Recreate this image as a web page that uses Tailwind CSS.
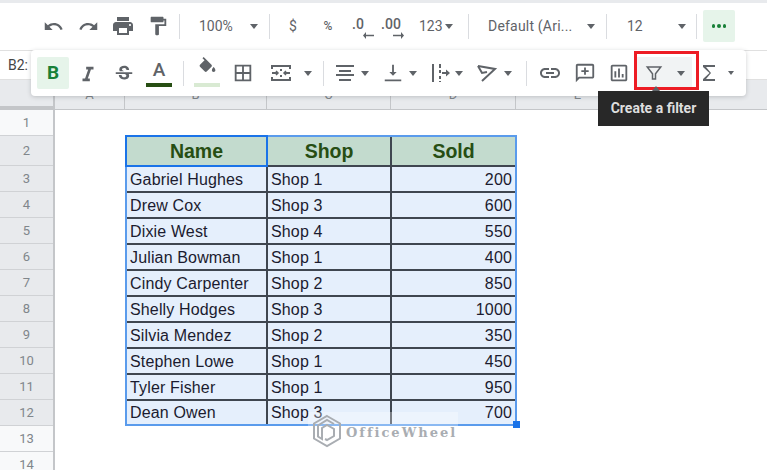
<!DOCTYPE html>
<html><head><meta charset="utf-8">
<script src="https://cdn.jsdelivr.net/npm/@tailwindcss/browser@4"></script>
</head>
<body class="w-[767px] h-[470px] overflow-hidden bg-white relative font-['Roboto',sans-serif] text-[#444746]">
<!-- top toolbar -->
<div class="h-[3px] bg-[#e8eaed]"></div>
<div class="h-[47px] flex items-center pl-[36px] pb-[1px] text-[#5f6368]">
  <div class="w-[35px] flex justify-center"><svg class="w-[21px] h-[21px] fill-[#5f6368]" viewBox="0 0 24 24"><path d="M12.5 8c-2.65 0-5.05.99-6.9 2.6L2 7v9h9l-3.62-3.62c1.39-1.16 3.16-1.88 5.12-1.88 3.54 0 6.55 2.31 7.6 5.5l2.37-.78C21.08 11.03 17.15 8 12.5 8z"/></svg></div>
  <div class="w-[35px] flex justify-center"><svg class="w-[21px] h-[21px] fill-[#5f6368]" viewBox="0 0 24 24"><path d="M18.4 10.6C16.55 8.99 14.15 8 11.5 8c-4.65 0-8.58 3.03-9.96 7.22L3.9 16c1.05-3.19 4.05-5.5 7.6-5.5 1.95 0 3.73.72 5.12 1.88L13 16h9V7l-3.6 3.6z"/></svg></div>
  <div class="w-[34px] flex justify-center"><svg class="w-[24px] h-[24px] fill-[#5f6368]" viewBox="0 0 24 24"><path d="M19 8H5c-1.66 0-3 1.34-3 3v6h4v4h12v-4h4v-6c0-1.66-1.34-3-3-3zm-3 11H8v-5h8v5zm3-7c-.55 0-1-.45-1-1s.45-1 1-1 1 .45 1 1-.45 1-1 1zm-1-9H6v4h12V3z"/></svg></div>
  <div class="w-[35px] flex justify-center"><svg class="w-[22px] h-[22px] fill-[#5f6368]" viewBox="0 0 24 24"><path d="M18 4V3c0-.55-.45-1-1-1H5c-.55 0-1 .45-1 1v4c0 .55.45 1 1 1h12c.55 0 1-.45 1-1V6h1v4H9v11c0 .55.45 1 1 1h2c.55 0 1-.45 1-1v-9h8V4h-3z"/></svg></div>
  <div class="w-px h-[25px] bg-[#dadce0] ml-[4px]"></div>
  <div class="w-[65px] pl-[19px] text-[14px]">100%</div>
  <div class="w-0 h-0 border-x-[4.5px] border-x-transparent border-t-[5px] border-t-[#5f6368] ml-[5px]"></div>
  <div class="w-px h-[25px] bg-[#dadce0] ml-[11px]"></div>
  <div class="w-[46px] text-center text-[14px]">$</div>
  <div class="w-[24px] text-center text-[12px] font-medium">%</div>
  <div class="w-[36px] flex justify-center"><div class="relative text-[14px] font-medium leading-none -mt-[4px]">.0<svg class="absolute left-[11px] top-[15px] w-[11px] h-[7px] fill-[#5f6368]" viewBox="0 0 11 7"><path d="M3 0v2.700h8v1.600H3V7L0 3.500z"/></svg></div></div>
  <div class="w-[30px] flex justify-center"><div class="relative text-[14px] font-medium leading-none -mt-[4px]">.00<svg class="absolute left-[12px] top-[15px] w-[11px] h-[7px] fill-[#5f6368]" viewBox="0 0 11 7"><path d="M8 0v2.700H0v1.600h8V7l3-3.500z"/></svg></div></div>
  <div class="w-[37px] text-[14px] pl-[13px]">123</div>
  <div class="w-0 h-0 border-x-[4.5px] border-x-transparent border-t-[5px] border-t-[#5f6368] ml-[2px]"></div>
  <div class="w-px h-[25px] bg-[#dadce0] ml-[15px]"></div>
  <div class="w-[113px] pl-[19px] text-[14px] tracking-[0.2px] whitespace-nowrap">Default (Ari...</div>
  <div class="w-0 h-0 border-x-[4.5px] border-x-transparent border-t-[5px] border-t-[#5f6368] ml-[5px]"></div>
  <div class="w-px h-[25px] bg-[#dadce0] ml-[11px]"></div>
  <div class="w-[71px] pl-[20px] text-[14px]">12</div>
  <div class="w-0 h-0 border-x-[4.5px] border-x-transparent border-t-[5px] border-t-[#5f6368]"></div>
  <div class="w-px h-[25px] bg-[#dadce0] ml-[10px]"></div>
  <div class="w-[32px] h-[32px] ml-[6px] rounded-[2px] bg-[#e6f4ea] flex items-center justify-center gap-[2px]">
    <span class="w-[3.5px] h-[3.5px] rounded-full bg-[#188038]"></span><span class="w-[3.5px] h-[3.5px] rounded-full bg-[#188038]"></span><span class="w-[3.5px] h-[3.5px] rounded-full bg-[#188038]"></span>
  </div>
</div>
<!-- formula bar -->
<div class="h-[30px] border-y border-[#e0e0e0] flex items-center pl-[8px] text-[14px] text-[#444]"><span>B2:</span></div>
<!-- sheet -->
<div class="flex">
  <div class="w-[55px] shrink-0 bg-[#e8eaed] border-r-2 border-[#c4c6c9] text-[13px] text-[#80868b] text-center">
    <div class="h-[30px] border-b-4 border-[#c4c6c9] bg-[#e8eaed]"></div>
    <div class="h-[26px] leading-[25px] border-b border-[#d0d2d5] bg-[#f8f9fa]">1</div>
    <div class="h-[30px] leading-[29px] border-b border-[#d0d2d5]">2</div>
    <div class="h-[26px] leading-[25px] border-b border-[#d0d2d5]">3</div>
    <div class="h-[26px] leading-[25px] border-b border-[#d0d2d5]">4</div>
    <div class="h-[26px] leading-[25px] border-b border-[#d0d2d5]">5</div>
    <div class="h-[26px] leading-[25px] border-b border-[#d0d2d5]">6</div>
    <div class="h-[26px] leading-[25px] border-b border-[#d0d2d5]">7</div>
    <div class="h-[26px] leading-[25px] border-b border-[#d0d2d5]">8</div>
    <div class="h-[26px] leading-[25px] border-b border-[#d0d2d5]">9</div>
    <div class="h-[26px] leading-[25px] border-b border-[#d0d2d5]">10</div>
    <div class="h-[26px] leading-[25px] border-b border-[#d0d2d5]">11</div>
    <div class="h-[26px] leading-[25px] border-b border-[#d0d2d5]">12</div>
    <div class="h-[26px] leading-[25px] border-b border-[#d0d2d5] bg-[#f8f9fa]">13</div>
    <div class="h-[26px] leading-[25px] bg-[#f8f9fa]">14</div>
  </div>
  <div class="flex-1 min-w-0">
    <div class="h-[30px] bg-[#e8eaed] border-b border-[#c4c6c9] flex text-[13px] text-[#80868b] text-center leading-[29px]">
      <div class="w-[70px] border-r border-[#c4c6c9]">A</div>
      <div class="w-[142px] border-r border-[#c4c6c9]">B</div>
      <div class="w-[124px] border-r border-[#c4c6c9]">C</div>
      <div class="w-[125px] border-r border-[#c4c6c9]">D</div>
      <div class="w-[124px] border-r border-[#c4c6c9]">E</div>
      <div class="flex-1"></div>
    </div>
    <div class="h-[26px]"></div>
    <div class="ml-[70px] w-[392px] relative font-['Liberation_Sans',Arial,sans-serif] text-[16px] tracking-[0.15px] text-[#1b1b2f] border-2 border-[#5a9bec] -mt-[1px]">
      <div class="grid grid-cols-[141px_124px_1fr] h-[30px] bg-[#c3dbce] text-[#274e13] text-[19.5px] tracking-normal font-bold text-center leading-[28px] border-b-2 border-[#3f4650]">
        <div class="border-2 border-[#1a73e8] -ml-[2px] -mt-[2px] leading-[28px]">Name</div>
        <div class="border-r-2 border-[#3f4650]">Shop</div>
        <div>Sold</div>
      </div>
      <div class="grid grid-cols-[141px_124px_1fr] grid-rows-[repeat(9,26px)_23px] bg-[#e5effc] leading-[25px] [&>div]:px-[3px] [&>div]:border-b-2 [&>div]:border-[#3f4650] [&>div:nth-child(3n+1)]:border-r-2 [&>div:nth-child(3n+2)]:border-r-2 [&>div:nth-child(3n)]:text-right [&>div:nth-last-child(-n+3)]:border-b-0 [&>div:nth-last-child(-n+3)]:leading-[23px]">
        <div>Gabriel Hughes</div><div>Shop 1</div><div>200</div>
        <div>Drew Cox</div><div>Shop 3</div><div>600</div>
        <div>Dixie West</div><div>Shop 4</div><div>550</div>
        <div>Julian Bowman</div><div>Shop 1</div><div>400</div>
        <div>Cindy Carpenter</div><div>Shop 2</div><div>850</div>
        <div>Shelly Hodges</div><div>Shop 3</div><div>1000</div>
        <div>Silvia Mendez</div><div>Shop 2</div><div>350</div>
        <div>Stephen Lowe</div><div>Shop 1</div><div>450</div>
        <div>Tyler Fisher</div><div>Shop 1</div><div>950</div>
        <div>Dean Owen</div><div>Shop 3</div><div>700</div>
      </div>
      <div class="absolute right-[-5px] bottom-[-4px] w-[7px] h-[7px] bg-[#1a73e8]"></div>
    </div>
  </div>
</div>
<!-- watermark -->
<div class="absolute left-[308px] top-[412px] w-[150px] h-[33px] bg-white/30 flex items-center gap-[4px] pl-[4px]">
  <svg class="w-[30px] h-[34px] shrink-0 mt-[5px]" viewBox="0 0 30 34" fill="none" stroke="#a9adb2" stroke-width="2"><path d="M15 2l13 7.500v15L15 32 2 24.500v-15z"/><path d="M22 10l-7-4-9 5.500v11l4 2.500v-11l5-3 7 4v7l-7 4-2-1"/></svg>
  <span class="font-['DejaVu_Serif',serif] text-[13px] tracking-[2px] text-[#a9adb2] font-bold mt-[8px] whitespace-nowrap">OfficeWheel</span>
</div>
<!-- floating toolbar -->
<div class="absolute left-[31px] top-[50px] w-[715px] h-[46px] bg-white rounded-[4px] shadow-[0_1px_4px_rgba(60,64,67,0.25)] flex items-center pl-[6px]">
  <div class="w-[32px] h-[32px] rounded-[2px] bg-[#e6f4ea] text-[#188038] font-bold text-[19px] flex items-center justify-center font-['Roboto',sans-serif]">B</div>
  <div class="w-[36px] ml-[1px] text-center"><svg class="w-[22px] h-[22px] inline fill-[#5f6368]" viewBox="0 0 24 24"><path d="M10 4v3h2.210l-3.420 10H6v3h8v-3h-2.210l3.420-10H18V4z"/></svg></div>
  <div class="w-[35px] text-center"><svg class="w-[22px] h-[22px] inline fill-[#5f6368]" viewBox="0 0 24 24"><path d="M6.850 7.080C6.850 4.370 9.450 3 12.240 3c1.640 0 3 .49 3.900 1.280.77.650 1.460 1.730 1.460 3.240h-3.010c0-.31-.05-.590-.150-.850-.290-.860-1.200-1.280-2.250-1.280-1.860 0-2.340 1.020-2.340 1.700 0 .480.250.880.740 1.210.380.250.770.480 1.410.700H7.390c-.210-.340-.540-.890-.540-1.920zM21 12v-2H3v2h9.620c1.150.450 1.960.750 1.960 1.970 0 1-.810 1.670-2.280 1.670-1.540 0-2.930-.540-2.930-2.510H6.400c0 .550.080 1.130.240 1.580.810 2.290 3.290 3.300 5.670 3.300 2.270 0 5.300-.890 5.300-4.050 0-.300-.010-1.160-.480-1.960H21z"/></svg></div>
  <div class="w-[36px] flex flex-col items-center relative h-[32px]"><span class="text-[19px] font-medium leading-[25px] text-[#5f6368]">A</span><div class="absolute left-[5px] top-[26px] w-[26px] h-[4px] bg-[#274e13]"></div></div>
  <div class="w-px h-[25px] bg-[#dadce0] ml-[6px]"></div>
  <div class="w-[48px] h-[32px] relative flex justify-center pr-[2px]"><svg class="w-[21px] h-[21px] fill-[#5f6368]" viewBox="0 0 24 24"><path d="M16.560 8.940L7.620 0 6.210 1.410l2.380 2.380-5.150 5.150c-.590.590-.590 1.540 0 2.120l5.500 5.500c.290.290.680.440 1.060.440s.770-.150 1.060-.440l5.500-5.500c.590-.580.590-1.530 0-2.120zM19 11.500s-2 2.170-2 3.500c0 1.100.9 2 2 2s2-.9 2-2c0-1.330-2-3.500-2-3.500z"/></svg><div class="absolute left-[10px] top-[26px] w-[26px] h-[4px] bg-[#d9ead3]"></div></div>
  <div class="w-[22px] flex justify-center"><svg class="w-[22px] h-[22px] shrink-0 fill-[#5f6368]" viewBox="0 0 24 24"><path d="M3 3v18h18V3H3zm8 16H5v-6h6v6zm0-8H5V5h6v6zm8 8h-6v-6h6v6zm0-8h-6V5h6v6z"/></svg></div>
  <div class="w-[40px] ml-[7px] text-center"><svg class="w-[24px] h-[24px] inline" viewBox="0 0 24 24" fill="none" stroke="#5f6368" stroke-width="2"><path d="M3 8V5h18v3M3 16v3h18v-3M3 12h6M15 12h6"/><path d="M7 10l2 2-2 2M17 10l-2 2 2 2" stroke-width="1.500"/><path d="M12 8v2M12 14v2" /></svg></div>
  <div class="w-0 h-0 border-x-[4.5px] border-x-transparent border-t-[5px] border-t-[#5f6368] ml-[3px]"></div>
  <div class="w-px h-[25px] bg-[#dadce0] ml-[11px]"></div>
  <div class="w-[38px] pl-[9px]"><svg class="w-[24px] h-[24px] fill-[#5f6368]" viewBox="0 0 24 24"><path d="M3 4h18v2H3zM6 9h12v2H6zM3 13h18v2H3zM6 18h12v2H6z"/></svg></div>
  <div class="w-0 h-0 border-x-[4.5px] border-x-transparent border-t-[5px] border-t-[#5f6368] -ml-[1px]"></div>
  <div class="w-[33px] ml-[2px] pl-[11px] flex justify-center"><svg class="w-[22px] h-[22px] shrink-0 fill-[#5f6368]" viewBox="0 0 24 24"><path d="M3 19h18v2H3zM16 11h-3V3h-2v8H8l4 4z"/></svg></div>
  <div class="w-0 h-0 border-x-[4.5px] border-x-transparent border-t-[5px] border-t-[#5f6368] ml-[5px]"></div>
  <div class="w-[34px] ml-[2px] pl-[8px] flex justify-center"><svg class="w-[24px] h-[24px] shrink-0 fill-[#5f6368]" viewBox="0 0 24 24"><path d="M4 3h2v18H4zM11 3h2v4h-2zM11 9h2v3h-2zM11 15h2v3h-2zM11 20h2v1h-2zM14 11h4V8.500l4 3.500-4 3.500V13h-4z"/></svg></div>
  <div class="w-0 h-0 border-x-[4.5px] border-x-transparent border-t-[5px] border-t-[#5f6368] ml-[2px]"></div>
  <div class="w-[36px] ml-[3px] pl-[6px] flex justify-center"><svg class="w-[24px] h-[24px] shrink-0" viewBox="0 0 24 24" fill="none" stroke="#5f6368" stroke-width="2"><path d="M3 5l17 3-13 12"/><path d="M3 5l4 7 5-1"/></svg></div>
  <div class="w-0 h-0 border-x-[4.5px] border-x-transparent border-t-[5px] border-t-[#5f6368] ml-[2px]"></div>
  <div class="w-px h-[25px] bg-[#dadce0] ml-[14px]"></div>
  <div class="w-[46px] text-center"><svg class="w-[24px] h-[24px] inline fill-[#5f6368]" viewBox="0 0 24 24"><path d="M3.900 12c0-1.710 1.390-3.100 3.100-3.100h4V7H7c-2.760 0-5 2.240-5 5s2.240 5 5 5h4v-1.900H7c-1.710 0-3.100-1.390-3.100-3.100zM8 13h8v-2H8v2zm9-6h-4v1.900h4c1.710 0 3.100 1.390 3.100 3.100s-1.390 3.100-3.100 3.100h-4V17h4c2.760 0 5-2.240 5-5s-2.240-5-5-5z"/></svg></div>
  <div class="w-[24px] flex justify-center"><svg class="w-[22px] h-[22px] shrink-0 fill-[#5f6368]" viewBox="0 0 24 24"><path d="M20 2H4c-1.100 0-2 .9-2 2v18l4-4h14c1.100 0 2-.9 2-2V4c0-1.100-.9-2-2-2zm0 14H5.170L4 17.170V4h16v12zM11 14h2v-3h3V9h-3V6h-2v3H8v2h3z"/></svg></div>
  <div class="w-[39px] pl-[5px] flex justify-center"><svg class="w-[22px] h-[22px] shrink-0 fill-[#5f6368]" viewBox="0 0 24 24"><path d="M19 3H5c-1.100 0-2 .9-2 2v14c0 1.100.9 2 2 2h14c1.100 0 2-.9 2-2V5c0-1.100-.9-2-2-2zm0 16H5V5h14v14zM7 10h2v7H7zM11 7h2v10h-2zM15 13h2v4h-2z"/></svg></div>
  <div class="w-[55px] h-[32px] ml-[1px] bg-[#f1f3f4] flex items-center pl-[8px]">
    <svg class="w-[18px] h-[18px] shrink-0 fill-none stroke-[#5f6368] stroke-2" viewBox="0 0 24 24"><path d="M3 4h18l-7 9v7h-4v-7z"/></svg>
    <div class="w-0 h-0 border-x-[4.5px] border-x-transparent border-t-[5px] border-t-[#5f6368] ml-[14px]"></div>
  </div>
  <div class="w-[30px] ml-[2px] text-center"><svg class="w-[24px] h-[24px] inline fill-[#5f6368]" viewBox="0 0 24 24"><path d="M18 4H6v2l6.500 6L6 18v2h12v-2H9l5-6-5-6h9z"/></svg></div>
  <div class="w-0 h-0 border-x-[3.5px] border-x-transparent border-t-[4px] border-t-[#5f6368] ml-[4px]"></div>
</div>
<!-- red highlight -->
<div class="absolute left-[634px] top-[51px] w-[65px] h-[39px] border-[3px] border-[#ed1c24]"></div>
<!-- tooltip -->
<div class="absolute left-[598px] top-[91px] w-[111px] h-[35px] bg-[#282828] text-[#dedede] text-[14px] font-bold flex items-center justify-center whitespace-nowrap">Create a filter</div>
<div class="absolute left-[652px] top-[86px] w-0 h-0 border-x-[4px] border-x-transparent border-b-[5px] border-b-[#5f6368]"></div>
</body></html>
